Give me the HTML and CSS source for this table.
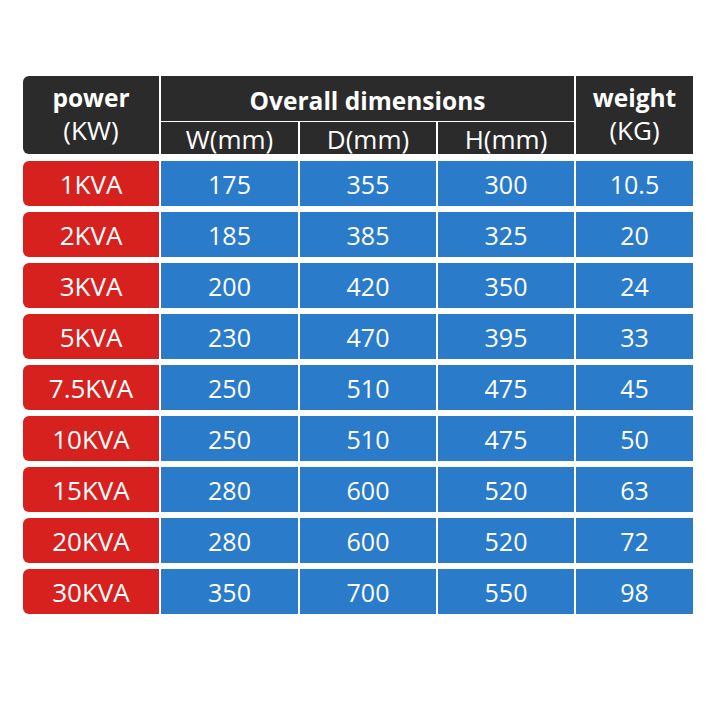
FILE: index.html
```html
<!DOCTYPE html>
<html>
<head>
<meta charset="utf-8">
<link rel="stylesheet" href="styles.css">
</head>
<body>
<div class="table">
  <div class="head">
    <div class="hcell power"><span class="b">power</span><span>(KW)</span></div>
    <div class="hcell overall b">Overall dimensions</div>
    <div class="hcell weight"><span class="b">weight</span><span>(KG)</span></div>
    <div class="hcell sub">W(mm)</div>
    <div class="hcell sub">D(mm)</div>
    <div class="hcell sub">H(mm)</div>
  </div>
  <div class="body">
    <div class="row"><div class="cell kva">1KVA</div><div class="cell">175</div><div class="cell">355</div><div class="cell">300</div><div class="cell">10.5</div></div>
    <div class="row"><div class="cell kva">2KVA</div><div class="cell">185</div><div class="cell">385</div><div class="cell">325</div><div class="cell">20</div></div>
    <div class="row"><div class="cell kva">3KVA</div><div class="cell">200</div><div class="cell">420</div><div class="cell">350</div><div class="cell">24</div></div>
    <div class="row"><div class="cell kva">5KVA</div><div class="cell">230</div><div class="cell">470</div><div class="cell">395</div><div class="cell">33</div></div>
    <div class="row"><div class="cell kva">7.5KVA</div><div class="cell">250</div><div class="cell">510</div><div class="cell">475</div><div class="cell">45</div></div>
    <div class="row"><div class="cell kva">10KVA</div><div class="cell">250</div><div class="cell">510</div><div class="cell">475</div><div class="cell">50</div></div>
    <div class="row"><div class="cell kva">15KVA</div><div class="cell">280</div><div class="cell">600</div><div class="cell">520</div><div class="cell">63</div></div>
    <div class="row"><div class="cell kva">20KVA</div><div class="cell">280</div><div class="cell">600</div><div class="cell">520</div><div class="cell">72</div></div>
    <div class="row"><div class="cell kva">30KVA</div><div class="cell">350</div><div class="cell">700</div><div class="cell">550</div><div class="cell">98</div></div>
  </div>
</div>
</body>
</html>
```
FILE: styles.css
```css
html, body {
  margin: 0;
  padding: 0;
  background: #ffffff;
}
body {
  width: 720px;
  height: 720px;
  font-family: "Open Sans", "Noto Sans", sans-serif;
  color: #ffffff;
}
.table {
  padding: 76px 0 0 23px;
  display: flex;
  flex-direction: column;
  gap: 7px;
}
.head, .row {
  display: grid;
  grid-template-columns: 136px 137px 136px 136px 117px;
  column-gap: 2px;
}
.head {
  grid-template-rows: 45px 32px;
  row-gap: 1px;
}
.hcell {
  background: #2b2b2b;
  display: flex;
  align-items: center;
  justify-content: center;
  font-size: 26px;
}
.b {
  font-weight: 700;
  font-size: 24.5px;
}
.power, .weight {
  grid-row: span 2;
  flex-direction: column;
  line-height: 33px;
  padding-bottom: 2px;
}
.power {
  border-radius: 6px 0 0 6px;
}
.overall {
  grid-column: span 3;
  padding-top: 4px;
}
.sub {
  padding-top: 2px;
}
.body {
  display: flex;
  flex-direction: column;
  gap: 6px;
}
.row {
  height: 45px;
}
.cell {
  background: #2b7bcb;
  display: flex;
  align-items: center;
  justify-content: center;
  font-size: 25px;
}
.kva {
  background: #d7211f;
  border-radius: 6px 0 0 6px;
  font-size: 26px;
}
```
